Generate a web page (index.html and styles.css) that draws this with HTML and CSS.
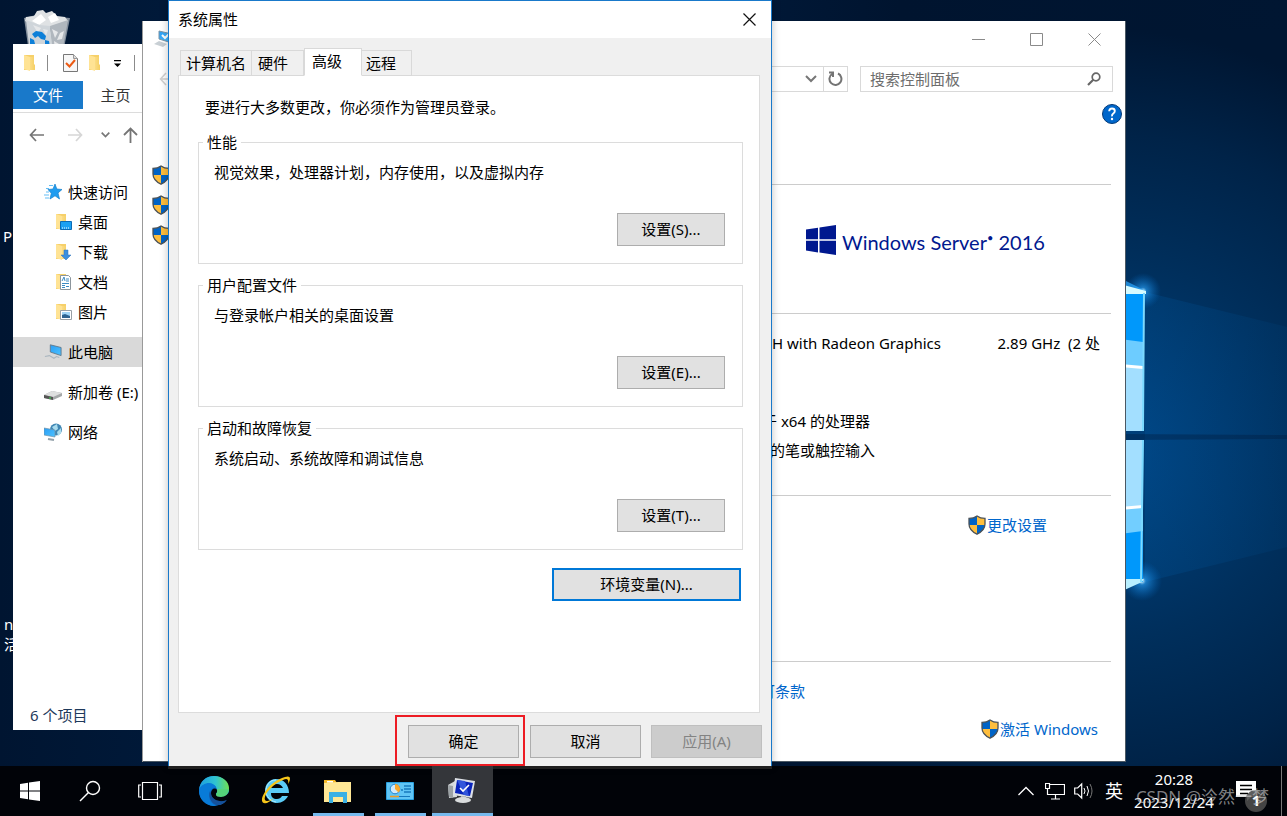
FILE: index.html
```html
<!DOCTYPE html>
<html lang="zh-CN">
<head>
<meta charset="utf-8">
<title>系统属性</title>
<link rel="stylesheet" href="styles.css">
</head>
<body>
<svg class="defs" aria-hidden="true">
  <defs>
    <linearGradient id="gold" x1="0" y1="0" x2="1" y2="0"><stop offset="0" stop-color="#fbdc85"/><stop offset="1" stop-color="#f5cf63"/></linearGradient>
    <linearGradient id="screen" x1="0" y1="0" x2="1" y2="1"><stop offset="0" stop-color="#2a9df4"/><stop offset="1" stop-color="#4cc2ff"/></linearGradient>
  </defs>
  <symbol id="shield" viewBox="0 0 18 20">
    <path d="M9 1C7 2.500 4 3.400 1 3.400V9c0 5 3.500 8 8 10.200C13.500 17 17 14 17 9V3.400C14 3.400 11 2.500 9 1z" fill="#ffbe3d"/>
    <path d="M9 1C7 2.500 4 3.400 1 3.400V10h8zM9 10h8c-.5 4.600-3.600 7-8 9.200z" fill="#0063c6"/>
    <path d="M9 1C7 2.500 4 3.400 1 3.400V9c0 5 3.500 8 8 10.200C13.500 17 17 14 17 9V3.400C14 3.400 11 2.500 9 1z" fill="none" stroke="#4b5258" stroke-width="1.300"/>
  </symbol>
  <symbol id="folder" viewBox="0 0 17 18">
    <path d="M1 1h10v9l1 1v5H1z" fill="#f6d069"/>
    <path d="M7 3h4v8l1 1v4H7z" fill="url(#gold)"/>
    <path d="M1 1l6 2v14l-6-2z" fill="#ffe394"/>
  </symbol>
  <symbol id="winlogo" viewBox="0 0 20 20">
    <path d="M0 3l8-1.200V9.500H0zM9 1.600L20 0v9.500H9zM0 10.500h8v7.800L0 17zM9 10.500h11V20L9 18.400z" fill="currentColor"/>
  </symbol>
</svg>

<div class="desktop">
  <svg class="wallpaper" viewBox="0 0 1287 816" preserveAspectRatio="none" aria-hidden="true">
    <defs>
      <radialGradient id="glow" gradientUnits="userSpaceOnUse" cx="1110" cy="450" r="420">
        <stop offset="0" stop-color="#00427f"/><stop offset=".2" stop-color="#003a70"/><stop offset=".45" stop-color="#002f5c"/><stop offset=".75" stop-color="#002348"/><stop offset="1" stop-color="#001632"/>
      </radialGradient>
      <radialGradient id="flare"><stop offset="0" stop-color="#eaffff"/><stop offset=".2" stop-color="#29a5ff" stop-opacity=".6"/><stop offset="1" stop-color="#0070d0" stop-opacity="0"/></radialGradient>
      <linearGradient id="base" x1="0" y1="0" x2="1" y2="0"><stop offset="0" stop-color="#001531"/><stop offset=".35" stop-color="#002047"/><stop offset=".7" stop-color="#00142f"/><stop offset="1" stop-color="#001632"/></linearGradient>
      <linearGradient id="beam" x1="0" y1="0" x2="1" y2="0"><stop offset="0" stop-color="#0064b4" stop-opacity=".2"/><stop offset="1" stop-color="#0064b4" stop-opacity=".08"/></linearGradient>
    </defs>
    <rect width="1287" height="816" fill="url(#base)"/>
    <rect x="690" y="30" width="597" height="786" fill="url(#glow)"/>
    <path d="M1145 292l142 35v220l-142 35z" fill="url(#beam)"/>
    <path d="M1120 434l167 1v4l-167 1z" fill="#001f42" opacity=".4"/>
    <circle cx="1143" cy="291" r="18" fill="url(#flare)"/>
    <circle cx="1142" cy="581" r="20" fill="url(#flare)"/>
    <path d="M1120 294h23v137h-23z" fill="#0098fb"/>
    <path d="M1120 339l23 3v89h-23z" fill="#6dccff"/>
    <path d="M1120 366l23 2v63h-23z" fill="#a3dfff"/>
    <path d="M1120 364l23 2v3l-23-2z" fill="#fff"/>
    <path d="M1120 440h23v142h-23z" fill="#0098fb"/>
    <path d="M1120 440h23v91l-23 3z" fill="#72ceff"/>
    <path d="M1120 440h23v67l-23 2z" fill="#a3dfff"/>
    <path d="M1120 507l23-2v3l-23 2z" fill="#fff"/>
    <path d="M1120 278l26 13v3h-26z" fill="#2ba8ff" opacity=".7"/>
    <path d="M1120 284l26 7v3h-26z" fill="#d7fbff"/>
    <path d="M1120 579h24l-2 3-22 10z" fill="#b8efff"/>
    <path d="M1144 293l-1 138M1143 440l-2 142" stroke="#7bd9ff" stroke-width="2"/>
  </svg>

  <div class="bin">
    <svg width="50" height="44" viewBox="0 0 50 44" aria-hidden="true">
      <path d="M1 9l12-3 34 3-7 35H6z" fill="#aeb7bf" opacity=".75"/>
      <path d="M3 8l8-1 3-5 6-1 3 3 6-2 5 5 8 1 3 4-8 5-12 2-14-2-9-5z" fill="#dfe2e4"/>
      <path d="M9 12l9-7 5 6-7 5zM25 8l7-4 4 7-8 3z" fill="#fff"/>
      <path d="M3 11l14 5 10 1 4 27H7z" fill="#cfd5da"/>
      <path d="M27 17l18-6-6 33h-9z" fill="#b0b7be"/>
      <path d="M29 20l6 3-3 6zM37 24l4-2-2 8-5 1zM31 32l5 3-4 6zM10 16l8 3-3 5zM20 20l5 1-2 6z" fill="#e6e8ea"/>
      <path d="M9 25l4-3 6 1 4 4-1 4-4-1-3-3-3 2zM7 29l4 2 1 4 3 3-1 6H9l-2-8zM22 31l4 1 1 6-3 5h-5l-1-3 4-3z" fill="#0d7fd8"/>
    </svg>
  </div>
  <span class="label label-p">P</span>
  <span class="label label-n">n<br>活</span>

  <section class="window explorer" aria-label="此电脑">
    <div class="qat">
      <svg class="qat-folder" width="17" height="18"><use href="#folder"/></svg>
      <i class="sep"></i>
      <svg class="qat-check" width="15" height="18" viewBox="0 0 15 18"><path d="M.5.500h10l4 4v13H.5z" fill="#f7f7f7" stroke="#777"/><path d="M10.500.500v4h4" fill="#ddd" stroke="#999"/><path d="M3 9l3.500 3.500L12 6" fill="none" stroke="#ec5a13" stroke-width="2"/></svg>
      <svg width="17" height="18"><use href="#folder"/></svg>
      <svg class="qat-more" width="7" height="8" viewBox="0 0 7 8"><path d="M0 0h7v1.200H0zM0 3.500h7L3.500 7z"/></svg>
      <i class="sep"></i>
    </div>
    <div class="ribbon"><button class="rtab file">文件</button><button class="rtab">主页</button></div>
    <div class="arrows">
      <svg width="16" height="14" viewBox="0 0 16 14"><path d="M7 1L1.500 7 7 13M1.500 7H15" fill="none" stroke="#757575" stroke-width="1.700"/></svg>
      <svg width="16" height="14" viewBox="0 0 16 14"><path d="M9 1l5.500 6L9 13M14.500 7H1" fill="none" stroke="#d6d6d6" stroke-width="1.700"/></svg>
      <svg width="9" height="6" viewBox="0 0 9 6"><path d="M.7.700l3.800 3.800L8.300.7" fill="none" stroke="#777" stroke-width="1.700"/></svg>
      <svg width="15" height="16" viewBox="0 0 15 16"><path d="M1 8l6.500-6.500L14 8M7.500 1.500V16" fill="none" stroke="#757575" stroke-width="1.800"/></svg>
    </div>
    <nav class="tree">
      <a href="#" class="node"><svg width="18" height="18" viewBox="0 0 18 18"><path d="M11 1l1.800 5L18 6.500l-4 3.400L15.500 16 11 12.800 6 16l1.300-5.800L4 6.500l5-.5z" fill="#1f9cf0" stroke="#1580cc" stroke-width=".7"/><path d="M5 2.500h4M2 5.500h3M2 9h3M0 12h5M1 15h4" stroke="#63bdf5"/></svg>快速访问</a>
      <a href="#" class="node sub"><svg width="17" height="18" viewBox="0 0 17 18"><use href="#folder"/><path d="M5.500 8.500h11v8h-11z" fill="#1ba1f2" stroke="#0c6cb5"/><path d="M7 15h8" stroke="#fff" stroke-dasharray="1 1"/></svg>桌面</a>
      <a href="#" class="node sub"><svg width="17" height="18" viewBox="0 0 17 18"><use href="#folder"/><path d="M9 7h4v5h3l-5 5-5-5h3z" fill="#3c8fde" stroke="#2b70b8" stroke-width=".5"/></svg>下载</a>
      <a href="#" class="node sub"><svg width="17" height="18" viewBox="0 0 17 18"><use href="#folder"/><path d="M5.500 2.500h8l2 2v12h-10z" fill="#fff" stroke="#8b959c"/><path d="M7 8l2-4 1 4M11 6h3M11 8h3M7 10.500h7M7 12.500h3M7 14.500h3M11 13.500h3" fill="none" stroke="#3c8bc3"/></svg>文档</a>
      <a href="#" class="node sub"><svg width="17" height="18" viewBox="0 0 17 18"><use href="#folder"/><path d="M5.500 7.500h11v9h-11z" fill="#fff" stroke="#98a0a6"/><path d="M7 9h8v6H7z" fill="#9fd4f7"/><path d="M7 12l3-1 5 2v2H7z" fill="#2e6391"/></svg>图片</a>
      <a href="#" class="node top selected"><svg width="20" height="18" viewBox="0 0 20 18"><path d="M7 1l12 3v9L7 9z" fill="url(#screen)" stroke="#62788a"/><path d="M1 14l5-1 5 3 3-2 3 1" fill="none" stroke="#aab6bf" stroke-width="1.200"/></svg>此电脑</a>
      <a href="#" class="node top"><svg width="18" height="18" viewBox="0 0 18 18"><path d="M0 12l8-4 10 2v3l-9 4-9-2z" fill="#a4a7a8"/><path d="M0 12l8-4 10 2-9 4z" fill="#dedfdf"/><path d="M0 12l9 2v3l-9-2z" fill="#555"/><path d="M5 15h2" stroke="#34e04b"/></svg>新加卷 (E:)</a>
      <a href="#" class="node top"><svg width="18" height="18" viewBox="0 0 18 18"><circle cx="12" cy="6.500" r="6" fill="#3f86b3"/><path d="M8 4l5-3 1 5-3 2zM13 9l4-4v5l-3 3z" fill="#a8dbed"/><path d="M0 5l11 2v7L0 12z" fill="url(#screen)" stroke="#7493a8" stroke-width=".7"/><path d="M4 16l6 1" stroke="#93a1aa" stroke-width="2"/></svg>网络</a>
    </nav>
    <div class="count">6 个项目</div>
  </section>

  <section class="window system" aria-label="系统">
    <header class="sys-title">
      <svg width="20" height="18" viewBox="0 0 20 18"><path d="M6 1l13 3v9L6 9z" fill="url(#screen)" stroke="#7d95a6"/><path d="M9 5l3 3 4-4" stroke="#fff" fill="none" stroke-width="2"/><path d="M1 14l5-3 8 3-4 3z" fill="#c8cfd4"/></svg>
      <div class="sys-buttons">
        <button aria-label="最小化"><svg width="13" height="13" viewBox="0 0 13 13"><path d="M0 6.500h13" stroke="#8a8a8a"/></svg></button>
        <button aria-label="最大化"><svg width="13" height="13" viewBox="0 0 13 13"><path d="M.5.500h12v12H.5z" fill="none" stroke="#8a8a8a"/></svg></button>
        <button aria-label="关闭"><svg width="13" height="13" viewBox="0 0 13 13"><path d="M.5.500l12 12M12.500.5l-12 12" stroke="#8a8a8a"/></svg></button>
      </div>
    </header>
    <div class="sys-nav">
      <svg width="16" height="14" viewBox="0 0 16 14"><path d="M7 1L1.500 7 7 13M1.500 7H15" fill="none" stroke="#d0d0d0" stroke-width="1.500"/></svg>
      <div class="address">
        <button aria-label="历史记录"><svg width="12" height="8" viewBox="0 0 12 8"><path d="M1 1l5 5 5-5" fill="none" stroke="#777" stroke-width="2"/></svg></button>
        <button class="refresh" aria-label="刷新"><svg width="15" height="15" viewBox="0 0 15 15"><path d="M10 2.500a6 6 0 1 1-6 .5M1 1.500h4v4.500" fill="none" stroke="#747474" stroke-width="2"/></svg></button>
      </div>
      <div class="search">
        <input type="text" placeholder="搜索控制面板" aria-label="搜索控制面板">
        <svg width="14" height="14" viewBox="0 0 14 14"><circle cx="9" cy="5" r="3.800" fill="none" stroke="#666" stroke-width="1.700"/><path d="M6.500 7.500L1 13" stroke="#666" stroke-width="2.200"/></svg>
      </div>
    </div>
    <div class="sys-body">
      <aside class="side">
        <svg width="18" height="20"><use href="#shield"/></svg>
        <svg width="18" height="20"><use href="#shield"/></svg>
        <svg width="18" height="20"><use href="#shield"/></svg>
      </aside>
      <main class="info">
        <button class="help" aria-label="帮助"><svg width="20" height="20" viewBox="0 0 20 20"><circle cx="10" cy="10" r="9.500" fill="#0067cb" stroke="#043a78"/><path d="M7.200 7.300Q7.200 4.500 10 4.500t2.800 2.500Q12.800 8.500 11.300 9.500T10 12.300" fill="none" stroke="#fff" stroke-width="1.900"/><circle cx="10" cy="15" r="1.200" fill="#fff"/></svg></button>
        <div class="brand">
          <svg width="30" height="30"><use href="#winlogo"/></svg>
          <span>Windows Server<sup>•</sup> 2016</span>
        </div>
        <div class="specs">
          <p class="cpu"><span>H with Radeon Graphics</span><span>2.89 GHz&nbsp; (2 处</span></p>
          <p class="arch">于 x64 的处理器</p>
          <p class="pen">的笔或触控输入</p>
        </div>
        <div class="domain"><a href="#"><svg width="18" height="20"><use href="#shield"/></svg>更改设置</a></div>
        <div class="activation">
          <a href="#" class="terms">可条款</a>
          <a href="#" class="activate"><svg width="18" height="20"><use href="#shield"/></svg>激活 Windows</a>
        </div>
      </main>
    </div>
  </section>

  <section class="dialog" role="dialog" aria-label="系统属性">
    <header class="dlg-title">
      <h1>系统属性</h1>
      <button aria-label="关闭"><svg width="13" height="13" viewBox="0 0 13 13"><path d="M.5.500l12 12M12.500.5l-12 12" stroke="#111" stroke-width="1.200"/></svg></button>
    </header>
    <div class="tabs" role="tablist">
      <button role="tab" class="tab t1">计算机名</button>
      <button role="tab" class="tab t2">硬件</button>
      <button role="tab" class="tab t3 active" aria-selected="true">高级</button>
      <button role="tab" class="tab t4">远程</button>
    </div>
    <div class="panel">
      <p class="intro">要进行大多数更改，你必须作为管理员登录。</p>
      <fieldset><legend>性能</legend><p>视觉效果，处理器计划，内存使用，以及虚拟内存</p><button class="btn">设置(S)...</button></fieldset>
      <fieldset><legend>用户配置文件</legend><p>与登录帐户相关的桌面设置</p><button class="btn">设置(E)...</button></fieldset>
      <fieldset><legend>启动和故障恢复</legend><p>系统启动、系统故障和调试信息</p><button class="btn">设置(T)...</button></fieldset>
      <button class="btn env">环境变量(N)...</button>
    </div>
    <footer class="actions">
      <div class="marked"><button class="btn">确定</button></div>
      <button class="btn">取消</button>
      <button class="btn" disabled>应用(A)</button>
    </footer>
  </section>

  <footer class="taskbar">
    <button class="sysbtn" aria-label="开始"><svg width="20" height="20"><use href="#winlogo"/></svg></button>
    <button class="sysbtn" aria-label="搜索"><svg width="22" height="22" viewBox="0 0 22 22"><circle cx="14" cy="8" r="6.500" fill="none" stroke="#fff" stroke-width="1.400"/><path d="M9.500 12.500L1 21" stroke="#fff" stroke-width="1.500"/></svg></button>
    <button class="sysbtn" aria-label="任务视图"><svg width="24" height="20" viewBox="0 0 24 20"><path d="M4.500 1.500h15v17h-15zM3 4H.7v12H3M21 4h2.300v12H21" fill="none" stroke="#fff" stroke-width="1.200"/></svg></button>
    <div class="apps">
      <button class="app" aria-label="Edge"><svg width="30" height="30" viewBox="0 0 30 30"><defs><linearGradient id="e1" x1="0" y1="0" x2="1" y2="0"><stop offset="0" stop-color="#1d9de0"/><stop offset=".55" stop-color="#30c4d1"/><stop offset="1" stop-color="#6fe052"/></linearGradient></defs><circle cx="15" cy="15" r="15" fill="#0c70cb"/><path d="M0 14C1 5 7 0 15 0c9 0 15 6 15 12 0 5-4 8-8 8-3 0-5-1-5-2 0-1 2-2 1-5-1-3-4-5-8-5-5 0-9 3-10 6z" fill="url(#e1)"/><path d="M0 14c2-5 6-7 10-7 3 0 6 2 7 4-4 0-7 4-7 9 0 5 3 9 8 10C8 31 0 24 0 14z" fill="#087bd8"/><path d="M11 15c-3 8 4 15 10 14 3-1 6-4 7-6-7 3-15 0-17-8z" fill="#15519b"/><path d="M12 17c0-4 4-6 6-3 1 2-1 3-1 4 0 2 4 3 7 2 3-.5 5-2 6-4v5l-2 3c-6 3-16 0-16-7z" fill="#02060c"/><path d="M12 16c-1 8 8 12 16 8-3 4-6 5-9 5-6 0-9-6-7-13z" fill="#15519b"/><path d="M30 13c0 5-4 8-8 8-3 0-5-1-5-2 0-1 2-3 1-6h10z" fill="#54d37a"/></svg></button>
      <button class="app" aria-label="Internet Explorer"><svg width="30" height="30" viewBox="0 0 30 30"><path d="M15 3C8 3 4 9 4 15s5 12 12 12c5 0 9-3 11-7h-6c-1 2-3 3-5 3-4 0-6-2-6-6h18C28 9 23 3 15 3zM10 12c1-3 3-4 6-4s5 2 6 4z" fill="#5bcbf6"/><path d="M15 4C8 4 5 10 5 15s4 10 10 11" fill="none" stroke="#b2edff"/><path d="M3 27C-4 25 8 5 24 1c6-2 6 2 3 7 1-5-1-6-5-4C9 9-1 24 6 25c2 0 4-1 7-3-4 4-8 6-10 5z" fill="#f6c51a"/></svg></button>
      <button class="app open" aria-label="文件资源管理器"><svg width="28" height="24" viewBox="0 0 28 24"><path d="M0 1h11l2 3H0z" fill="#f5b928"/><path d="M0 4l14-1h13v20H0z" fill="#ffe795"/><path d="M3 2h6v1.500H3z" fill="#fff"/><path d="M5 13h18v11h-4v-6H9v6H5z" fill="#3bb0e4"/></svg></button>
      <button class="app open" aria-label="控制面板"><svg width="28" height="20" viewBox="0 0 28 20"><path d="M.5 1.500h27v17H.5z" fill="#61c5f5" stroke="#2aa0df"/><circle cx="9" cy="8" r="4.800" fill="#cfe9fb" stroke="#2585ce"/><path d="M9 8V3a5 5 0 0 1 3.600 8.500z" fill="#f7a82d"/><path d="M15 9h2M18 5h7M18 8h7M18 11h7" stroke="#1779bd" stroke-width="1.500"/><path d="M4 15.500h9" stroke="#ee9b23" stroke-width="1.500"/><path d="M13 15.500h11" stroke="#1779bd"/></svg></button>
      <button class="app open current" aria-label="系统属性"><svg width="29" height="26" viewBox="0 0 29 26"><path d="M1 7l7-4 2 16-8 1z" fill="#d7dbdc"/><path d="M1 7l5 1v12l-4-1z" fill="#9ca2a5"/><path d="M8 0l20 3-3 17-19-3z" fill="#dce0e6"/><path d="M10 2l16 3-3 13L8 15z" fill="#0924bb"/><path d="M10 2l8 1 4 15-5-1z" fill="#3155db"/><path d="M13 10l3 3 6-6" fill="none" stroke="#fff" stroke-width="1.600"/><path d="M14 18h5v3h-5z" fill="#b5b9bb"/><ellipse cx="16" cy="22" rx="8" ry="3" fill="#d9dcdd"/></svg></button>
    </div>
    <div class="tray">
      <svg width="16" height="10" viewBox="0 0 16 10"><path d="M.5 9L8 1.500 15.500 9" fill="none" stroke="#fff" stroke-width="1.300"/></svg>
      <svg width="20" height="17" viewBox="0 0 20 17"><path d="M5 1.500h14.500v10H2.500V6M.5.500h4v5h-4zM10.500 12v4M6 16h9" fill="none" stroke="#fff" stroke-width="1.200"/></svg>
      <svg width="20" height="18" viewBox="0 0 20 18"><path d="M.7 6h3l4-4v14l-4-4h-3z" fill="none" stroke="#fff" stroke-width="1.200"/><path d="M10 6q2 3 0 6M13 4q3 5 0 10" fill="none" stroke="#fff"/><path d="M16 2q4 7 0 14" fill="none" stroke="#777"/></svg>
      <span class="ime">英</span>
      <div class="clock"><time>20:28</time><time>2023/12/24</time></div>
      <svg class="note" width="20" height="20" viewBox="0 0 20 20"><path d="M0 0h20v16h-5l-4 4v-4H0z" fill="#fff"/><path d="M4 4.500h12M4 8.500h12M4 12.500h8" stroke="#000" stroke-width="1.400"/></svg>
      <i class="peek"></i>
    </div>
  </footer>
  <span class="badge">1</span>
  <div class="watermark">CSDN @泠然一梦</div>
</div>
</body>
</html>
```
FILE: styles.css
```css
* { box-sizing: border-box; }
body { margin: 0; }
body, button, input { font: 15px/20px "Noto Sans", "Noto Sans CJK SC", sans-serif; color: #000; }
button { padding: 0; border: 0; background: none; display: flex; align-items: center; justify-content: center; }
h1, p, fieldset { margin: 0; font-weight: normal; }
a { color: #0066cc; text-decoration: none; }
svg { display: block; flex: none; }
.defs { position: absolute; width: 0; height: 0; }
.desktop { position: relative; height: 100vh; min-height: 816px; display: flex; flex-direction: column; justify-content: flex-end; overflow: hidden; background: #001531; }
.wallpaper { position: absolute; inset: 0; width: 100%; height: 100%; }
.bin { position: absolute; left: 23px; top: 9px; }
.label { position: absolute; color: #fff; }
.label-p { left: 3px; top: 226px; }
.label-n { left: 4px; top: 614px; }

.window { position: absolute; background: #fff; display: flex; flex-direction: column; overflow: hidden; }

/* File Explorer */
.explorer { left: 13px; top: 44px; bottom: 86px; width: 150px; }
.qat { height: 37px; display: flex; align-items: center; padding-left: 10px; }
.qat svg { margin-right: 12px; }
.qat .qat-folder { margin-right: 7px; }
.qat .qat-check { margin-right: 10px; }
.qat .qat-more { margin-left: -3px; margin-top: 3px; margin-right: 13px; }
.sep { width: 1px; height: 16px; background: #8b8b8b; margin-right: 15px; }
.ribbon { display: flex; height: 32px; border-bottom: 1px solid #dcdcdc; }
.rtab { height: 28px; width: 65px; color: #333; }
.rtab.file { width: 70px; background: #1979ca; color: #fff; }
.arrows { height: 44px; display: flex; align-items: center; gap: 22px; padding-left: 16px; }
.arrows svg:nth-child(3) { margin-left: -4px; }
.arrows svg:nth-child(4) { margin-left: -9px; }
.tree { flex: 1; padding-top: 20px; }
.node { display: flex; align-items: center; height: 30px; padding-left: 31px; color: #000; white-space: nowrap; }
.node svg { width: 18px; margin-right: 6px; }
.node.sub { padding-left: 42px; }
.node.sub svg { width: 17px; }
.node.top { margin-top: 10px; }
.node.selected { background: #d9d9d9; }
.count { padding: 0 17px 5px; color: #1e395b; }

/* System control panel */
.system { left: 143px; right: 161px; top: 21px; bottom: 54px; border: 1px solid #4b5863; border-width: 0 1px 1px 0; box-shadow: -1px 0 0 #999; }
.sys-title { height: 36px; display: flex; align-items: center; justify-content: space-between; padding-left: 10px; }
.sys-buttons { display: flex; padding-right: 2px; }
.sys-buttons button { width: 58px; height: 36px; }
.sys-nav { display: flex; align-items: center; height: 43px; padding: 0 12px 0 16px; }
.address { flex: 1; height: 26px; margin-left: 90px; margin-right: 12px; border: 1px solid #d9d9d9; display: flex; justify-content: flex-end; }
.address button { width: 24px; }
.address .refresh { border-left: 1px solid #d9d9d9; }
.search { width: 253px; height: 26px; border: 1px solid #d9d9d9; display: flex; align-items: center; padding: 0 11px 0 9px; }
.search input { flex: 1; min-width: 0; border: 0; padding: 0; background: none; outline: 0; }
.search input::placeholder { color: #6d6d6d; opacity: 1; }
.sys-body { flex: 1; display: flex; }
.side { width: 617px; padding: 65px 0 0 9px; display: flex; flex-direction: column; gap: 10px; }
.info { flex: 1; padding-right: 14px; display: flex; flex-direction: column; }
.help { align-self: flex-end; margin: 4px -11px 60px 0; }
.brand { height: 130px; border: 1px solid #ccc; border-width: 1px 0; display: flex; align-items: center; gap: 6px; padding: 0 0 18px 46px; color: #00188f; font: 20px/30px "Lato", sans-serif; white-space: nowrap; }
.brand span { padding-top: 3px; }
.brand sup { font-size: 11px; line-height: 0; }
.specs { height: 182px; padding-top: 19px; border-bottom: 1px solid #ccc; }
.cpu { display: flex; justify-content: space-between; padding: 0 11px 0 12px; white-space: nowrap; }
.arch { padding: 58px 0 0 2px; }
.pen { padding: 9px 0 0 10px; }
.domain { height: 166px; padding: 19px 64px 0 0; border-bottom: 1px solid #ccc; display: flex; justify-content: flex-end; }
.domain a, .activate { display: flex; align-items: center; height: 20px; gap: 1px; }
.activation { padding-top: 19px; display: flex; flex-direction: column; }
.activate { align-self: flex-end; margin: 18px 13px 0 0; }

/* System Properties dialog */
.dialog { position: absolute; left: 168px; top: 0; bottom: 50px; width: 604px; background: #f0f0f0; border: 1px solid #1979ca; border-bottom: 0; box-shadow: 0 3px 0 #202020, 0 0 8px rgba(0,0,0,.25); display: flex; flex-direction: column; z-index: 2; }
.dlg-title { height: 37px; background: #fff; display: flex; align-items: center; justify-content: space-between; padding: 0 15px 1px 9px; }
.dlg-title h1 { font-size: 15px; line-height: 20px; }
.tabs { display: flex; align-items: flex-end; height: 38px; padding-left: 11px; position: relative; z-index: 1; margin-bottom: -1px; }
.tab { height: 26px; border: 1px solid #d9d9d9; justify-content: flex-start; padding-left: 5px; }
.tab + .tab { border-left: 0; }
.t1 { width: 72px; }
.t2 { width: 52px; padding-left: 6px; }
.t3 { width: 58px; height: 28px; padding: 0 0 2px 7px; background: #fff; border-bottom-color: #fff; }
.tab.t3 { border-left: 1px solid #d9d9d9; }
.t4 { width: 50px; padding-left: 4px; }
.panel { flex: 1; margin: 0 11px 0 9px; border: 1px solid #dcdcdc; background: #fff; padding: 21px 16px 0 19px; display: flex; flex-direction: column; gap: 11px; }
.intro { padding: 0 0 4px 7px; }
fieldset { border: 1px solid #dcdcdc; padding: 10px 17px 17px 15px; height: 132px; min-width: 0; }
legend { line-height: 20px; padding: 0 4px; margin-left: -11px; }
.btn { height: 33px; background: #e1e1e1; border: 1px solid #adadad; padding-bottom: 2px; }
fieldset .btn { width: 108px; margin: 31px 0 0 auto; }
.env { width: 189px; border: 2px solid #0078d7; align-self: flex-end; margin: 7px 2px 0 0; }
.actions { height: 53px; display: flex; justify-content: flex-end; gap: 10px; padding: 12px 9px 0 0; }
.actions .btn { width: 111px; }
.actions .btn:disabled { color: #838383; background: #ccc; border-color: #bfbfbf; }
.marked { position: relative; height: 33px; margin-right: 1px; }
.marked::after { content: ""; position: absolute; inset: -10px -6px -8px -13px; border: 2px solid #ed1c24; pointer-events: none; }

/* Taskbar */
.taskbar { position: relative; height: 50px; background: #010308; display: flex; justify-content: space-between; }
.sysbtn { width: 60px; color: #fff; }
.apps { flex: 1; display: flex; gap: 1px; padding-left: 4px; }
.app { width: 61px; position: relative; padding-right: 2px; }
.app.open::after { content: ""; position: absolute; left: 5px; right: 5px; bottom: 0; height: 3px; background: #76b9ed; }
.app.current { background: #34363a; z-index: 3; }
.app.current::after { left: 0; right: 0; }
.tray { display: flex; align-items: center; color: #fff; }
.tray svg + svg { margin-left: 11px; }
.tray svg:nth-child(3) { margin-left: 9px; }
.ime { font-size: 18px; margin: 0 8px 0 11px; }
.clock { display: flex; flex-direction: column; align-items: center; width: 86px; gap: 3px; padding-bottom: 2px; }
.note { margin-left: 19px; }
.peek { width: 1px; height: 50px; background: #777; margin: 0 5px 0 25px; }
.badge { position: absolute; right: 20px; bottom: 4px; width: 22px; height: 22px; border-radius: 50%; background: rgba(75,75,75,.9); color: #fff; font-weight: bold; text-align: center; }
.watermark { position: absolute; right: 18px; bottom: 9px; font-size: 17px; color: rgba(200,200,200,.65); white-space: nowrap; }
```
